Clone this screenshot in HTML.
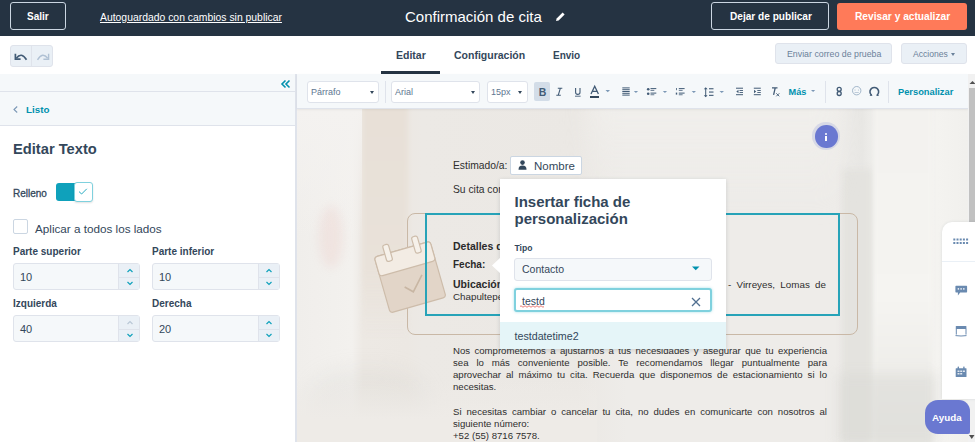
<!DOCTYPE html>
<html><head><meta charset="utf-8">
<style>
*{box-sizing:border-box;margin:0;padding:0}
html,body{width:975px;height:442px;overflow:hidden;background:#fff;font-family:"Liberation Sans",sans-serif;color:#33475b}
.a{position:absolute}
.t{position:absolute;white-space:nowrap;line-height:1}
.btn-o{position:absolute;border:1px solid #cbd6e2;border-radius:3px}
.sel{position:absolute;background:#fff;border:1px solid #dfe3eb;border-radius:3px}
.caret{position:absolute;width:0;height:0;border-left:2.5px solid transparent;border-right:2.5px solid transparent;border-top:3px solid #516f90}
.inp{position:absolute;background:#f5f8fa;border:1px solid #dfe3eb;border-radius:3px}
.spin{position:absolute;right:0;top:0;width:21px;height:100%;background:#eaf0f6;border-left:1px solid #dfe3eb}
.spin:after{content:"";position:absolute;left:0;right:0;top:12.5px;height:1px;background:#dfe3eb}
svg{position:absolute;overflow:visible}
.em{position:absolute;white-space:nowrap;font-family:"Liberation Sans",sans-serif;color:#2e2e2e;line-height:1}
.jl{position:absolute;left:453px;width:374px;white-space:nowrap;text-align:justify;text-align-last:justify;font-size:9.6px;color:#2e2e2e;line-height:1}
</style></head>
<body>
<!-- ================= TOP BAR ================= -->
<div class="a" style="left:0;top:0;width:975px;height:36px;background:#253342"></div>
<div class="btn-o" style="left:10px;top:2px;width:56px;height:28px"></div>
<div class="t" style="left:27px;top:12px;font-size:10px;font-weight:700;color:#fff">Salir</div>
<div class="t" style="left:100px;top:13px;font-size:10.4px;color:#fff;text-decoration:underline">Autoguardado con cambios sin publicar</div>
<div class="t" style="left:405px;top:9px;font-size:15px;color:#fff">Confirmación de cita</div>
<svg style="left:555px;top:11px" width="11" height="11" viewBox="0 0 11 11"><path d="M1 10 L1.6 7.4 L7.6 1.4 L9.6 3.4 L3.6 9.4 Z" fill="#fff"/></svg>
<div class="btn-o" style="left:711px;top:2px;width:118px;height:28px"></div>
<div class="t" style="left:730px;top:12px;font-size:10.1px;font-weight:700;color:#fff">Dejar de publicar</div>
<div class="a" style="left:837px;top:3px;width:130px;height:27px;background:#ff7a59;border-radius:3px"></div>
<div class="t" style="left:855px;top:12px;font-size:10.2px;font-weight:700;color:#fff">Revisar y actualizar</div>

<!-- ================= SECOND BAR ================= -->
<div class="a" style="left:10px;top:45px;width:43px;height:22px;background:#eaf0f6;border:1px solid #dfe3eb;border-radius:3px"></div>
<div class="a" style="left:31px;top:46px;width:1px;height:20px;background:#dfe3eb"></div>
<svg style="left:0;top:0" width="60" height="70">
 <g fill="none" stroke-width="1.7" stroke-linecap="butt">
  <path d="M16.3 58.3 Q21.5 51.5 26.5 59.8" stroke="#425b76"/>
  <path d="M15.4 53.8 V59.2 H20.6" stroke="#425b76"/>
  <path d="M47.7 58.3 Q42.5 51.5 37.5 59.8" stroke="#b0c1d4" stroke-width="1.4"/>
  <path d="M48.6 53.8 V59.2 H43.4" stroke="#b0c1d4" stroke-width="1.4"/>
 </g>
</svg>
<div class="t" style="left:396px;top:50px;font-size:10.5px;font-weight:700;color:#33475b">Editar</div>
<div class="t" style="left:454px;top:50px;font-size:10.5px;font-weight:700;color:#33475b">Configuración</div>
<div class="t" style="left:553px;top:51px;font-size:10px;font-weight:700;color:#33475b">Envio</div>
<div class="a" style="left:381px;top:71px;width:59px;height:3px;background:#253342"></div>
<div class="a" style="left:775px;top:43px;width:117px;height:21px;background:#eaf0f6;border:1px solid #dfe3eb;border-radius:3px"></div>
<div class="t" style="left:787px;top:50px;font-size:8.8px;color:#6a819a">Enviar correo de prueba</div>
<div class="a" style="left:901px;top:43px;width:66px;height:21px;background:#eaf0f6;border:1px solid #dfe3eb;border-radius:3px"></div>
<div class="t" style="left:913px;top:50px;font-size:8.6px;color:#6a819a">Acciones</div>
<div class="caret" style="left:950.5px;top:53px;border-top-color:#6a819a"></div>

<!-- ================= LEFT PANEL ================= -->
<div class="a" style="left:0;top:74px;width:296px;height:18px;background:#f5f8fa;border-bottom:1px solid #dfe3eb"></div>
<svg style="left:281px;top:80px" width="9" height="8" viewBox="0 0 9 8"><path d="M4.5 0.5 L1 4 L4.5 7.5 M8.5 0.5 L5 4 L8.5 7.5" stroke="#0091ae" stroke-width="1.6" fill="none"/></svg>
<div class="a" style="left:0;top:92px;width:296px;height:34px;background:#f5f8fa;border-bottom:1px solid #dfe3eb"></div>
<svg style="left:13px;top:106px" width="5" height="7" viewBox="0 0 5 7"><path d="M4.2 0.5 L1 3.5 L4.2 6.5" stroke="#7c98b6" stroke-width="1.1" fill="none"/></svg>
<div class="t" style="left:26px;top:105px;font-size:9.8px;font-weight:700;color:#0091ae">Listo</div>
<div class="a" style="left:0;top:126px;width:296px;height:316px;background:#fff"></div>
<div class="a" style="left:295px;top:74px;width:2px;height:368px;background:#dfe3eb"></div>
<div class="t" style="left:13px;top:142px;font-size:14.7px;font-weight:700;color:#33475b">Editar Texto</div>
<div class="t" style="left:13px;top:189.3px;font-size:10px;color:#33475b;-webkit-text-stroke:0.3px #33475b">Relleno</div>
<div class="a" style="left:56px;top:183px;width:20px;height:18px;background:#0fa1bb;border-radius:3px 0 0 3px"></div>
<div class="a" style="left:74px;top:182px;width:19px;height:20px;background:#fff;border:1px solid #7fd1de;border-radius:3px;box-shadow:0 1px 2px rgba(0,0,0,.12)"></div>
<svg style="left:78px;top:188px" width="10" height="7" viewBox="0 0 10 7"><path d="M1 3.6 L3.6 6 L8.8 0.8" stroke="#0fa1bb" stroke-width="0.9" fill="none"/></svg>
<div class="a" style="left:13px;top:219px;width:15px;height:15px;background:#fff;border:1px solid #cbd6e2;border-radius:2px"></div>
<div class="t" style="left:35px;top:222.5px;font-size:11.7px;color:#33475b">Aplicar a todos los lados</div>
<div class="t" style="left:13px;top:247px;font-size:10px;font-weight:700">Parte superior</div>
<div class="t" style="left:152px;top:247px;font-size:10px;font-weight:700">Parte inferior</div>
<div class="inp" style="left:13px;top:263px;width:127px;height:27px"><div class="spin"></div></div>
<div class="inp" style="left:152px;top:263px;width:128px;height:27px"><div class="spin"></div></div>
<div class="t" style="left:20px;top:272px;font-size:11px;color:#33475b">10</div>
<div class="t" style="left:159px;top:272px;font-size:11px;color:#33475b">10</div>
<div class="t" style="left:13px;top:299px;font-size:10px;font-weight:700">Izquierda</div>
<div class="t" style="left:152px;top:299px;font-size:10px;font-weight:700">Derecha</div>
<div class="inp" style="left:13px;top:315px;width:127px;height:27px"><div class="spin"></div></div>
<div class="inp" style="left:152px;top:315px;width:128px;height:27px"><div class="spin"></div></div>
<div class="t" style="left:20px;top:324px;font-size:11px;color:#33475b">40</div>
<div class="t" style="left:159px;top:324px;font-size:11px;color:#33475b">20</div>
<!-- spinner chevrons -->
<svg style="left:0;top:0" width="300" height="442">
 <g stroke="#0fa1bb" stroke-width="1.2" fill="none">
  <path d="M127.5 272 L130 269.5 L132.5 272"/><path d="M127.5 282 L130 284.5 L132.5 282"/>
  <path d="M266.5 272 L269 269.5 L271.5 272"/><path d="M266.5 282 L269 284.5 L271.5 282"/>
  <path d="M127.5 324 L130 321.5 L132.5 324" stroke="#b9c7d6"/><path d="M127.5 334 L130 336.5 L132.5 334"/>
  <path d="M266.5 324 L269 321.5 L271.5 324"/><path d="M266.5 334 L269 336.5 L271.5 334"/>
 </g>
</svg>
<!-- ================= CANVAS ================= -->
<div id="cv" class="a" style="left:297px;top:109px;width:678px;height:333px;overflow:hidden;background:#ebe7e2">
  <!-- photo approximation -->
  <div class="a" style="left:0;top:0;width:678px;height:333px;background:linear-gradient(90deg,#f0eeeb 0px,#f3f1ee 55px,#ede9e4 66px,#ece8e3 110px,#ece9e5 125px,#ebe8e4 280px,#eeece9 330px,#eeece9 540px,#e8e7e4 565px,#f1f0ed 580px,#f4f3f0 640px,#f0efec 678px)"></div>
  <div class="a" style="left:65px;top:-10px;width:46px;height:250px;background:linear-gradient(180deg,#e8e0d7 0,#e9e2da 170px,rgba(236,232,227,0) 240px);filter:blur(2px)"></div>
  <div class="a" style="left:0;top:0;width:65px;height:130px;background:linear-gradient(180deg,#f4f2f0,rgba(244,242,240,0))"></div>
  <div class="a" style="left:22px;top:97px;width:24px;height:62px;border-radius:50%;background:rgba(228,170,160,.16);filter:blur(5px)"></div>
  <div class="a" style="left:10px;top:260px;width:120px;height:80px;border-radius:40%;background:rgba(200,198,194,.18);filter:blur(10px)"></div>
  <div class="a" style="left:0;top:270px;width:300px;height:63px;background:linear-gradient(180deg,rgba(239,236,232,0),#eeebe7 40px)"></div>
  <div class="a" style="left:545px;top:60px;width:30px;height:273px;background:#e4e3df;filter:blur(3px)"></div>
  <div class="a" style="left:577px;top:-10px;width:58px;height:353px;background:linear-gradient(180deg,#f3f2ef,#f5f4f1 200px,#e9e8e4 333px);filter:blur(2px)"></div>
  <div class="a" style="left:540px;top:265px;width:100px;height:70px;background:rgba(215,214,210,.45);filter:blur(6px)"></div>
  <div class="a" style="left:290px;top:-20px;width:250px;height:120px;background:linear-gradient(180deg,rgba(243,242,239,.6),rgba(243,242,239,0));filter:blur(12px)"></div>
</div>
<!-- toolbar -->
<div class="a" style="left:297px;top:74px;width:671px;height:35px;background:#f5f8fa;border-bottom:1px solid #dfe3eb;box-shadow:0 1px 2px rgba(0,0,0,.06)"></div>
<div class="sel" style="left:307px;top:81px;width:72px;height:22px"></div>
<div class="t" style="left:311px;top:88px;font-size:9px;color:#5e7691">Párrafo</div>
<div class="caret" style="left:370px;top:91px;border-top-color:#33475b"></div>
<div class="a" style="left:385px;top:81px;width:1px;height:22px;background:#dfe3eb"></div>
<div class="sel" style="left:391px;top:81px;width:89px;height:22px"></div>
<div class="t" style="left:395px;top:88px;font-size:9px;color:#5e7691">Arial</div>
<div class="caret" style="left:471px;top:91px;border-top-color:#33475b"></div>
<div class="sel" style="left:487px;top:81px;width:41px;height:22px"></div>
<div class="t" style="left:491px;top:88px;font-size:9px;color:#5e7691">15px</div>
<div class="caret" style="left:518px;top:91px;border-top-color:#33475b"></div>
<div class="a" style="left:534px;top:82px;width:16px;height:19px;background:#d3dde8;border-radius:2px"></div>
<div class="t" style="left:538.8px;top:87px;font-size:10.5px;font-weight:700;color:#425b76">B</div>
<svg style="left:0;top:0" width="620" height="110"><g fill="none" stroke="#425b76">
 <path d="M557.8 88.2 H562.3 M556.3 95.3 H560.8 M560.4 88.2 L558.2 95.3" stroke-width="1.1"/>
 <path d="M575.6 88 V92.3 Q575.6 94.4 577.8 94.4 Q580 94.4 580 92.3 V88" stroke-width="1.1"/>
 <path d="M575 96.2 H580.6" stroke-width="0.9"/>
 <path d="M591 94 L594.7 86.3 L598.4 94 M592.4 91.3 H597" stroke-width="1.3"/>
</g></svg>
<div class="a" style="left:590px;top:96.3px;width:9px;height:1.8px;background:#33475b"></div>
<svg style="left:0;top:0" width="975" height="110">
 <g fill="#7c98b6">
  <path d="M605.5 90 h4.5 l-2.25 2.3z"/>
  <path d="M633.8 91 h4.3 l-2.15 2.1z"/>
  <path d="M662.8 91 h4.3 l-2.15 2.1z"/>
  <path d="M691.7 91 h4.3 l-2.15 2.1z"/>
  <path d="M719.5 91 h4.5 l-2.25 2.1z"/>
  <path d="M811 90 h4.2 l-2.1 1.9z"/>
 </g>
 <g fill="#425b76">
  <!-- align -->
  <rect x="622.3" y="87.4" width="7.4" height="1"/><rect x="622.3" y="89.2" width="7.4" height="1"/><rect x="622.3" y="91" width="7.4" height="1"/><rect x="622.3" y="92.8" width="7.4" height="1"/><rect x="622.3" y="94.6" width="7.4" height="1"/>
  <!-- bullets -->
  <circle cx="648.2" cy="89.3" r="1.3"/><circle cx="648.2" cy="93.8" r="1.3"/>
  <rect x="650.5" y="88.1" width="5.8" height="1"/><rect x="650.5" y="89.9" width="3.8" height="0.8"/>
  <rect x="650.5" y="92.6" width="5.8" height="1"/><rect x="650.5" y="94.4" width="3.8" height="0.8"/>
  <!-- numbered -->
  <rect x="676" y="88" width="0.8" height="2.2"/><rect x="675.8" y="92.6" width="1.4" height="2"/>
  <rect x="678.8" y="88.1" width="5.8" height="1"/><rect x="678.8" y="89.9" width="3.8" height="0.8"/>
  <rect x="678.8" y="92.6" width="5.8" height="1"/><rect x="678.8" y="94.4" width="3.8" height="0.8"/>
  <!-- line height -->
  <rect x="705.2" y="88" width="1" height="8.5"/><path d="M703.8 89.2 l1.9 -1.9 l1.9 1.9z M703.8 95.3 l1.9 1.9 l1.9 -1.9z"/>
  <rect x="709" y="88.2" width="4.5" height="1.1"/><rect x="709" y="91.5" width="4.5" height="1.1"/><rect x="709" y="94.8" width="4.5" height="1.1"/>
  <!-- outdent -->
  <rect x="736" y="87.7" width="7" height="1"/><rect x="739.5" y="90" width="3.5" height="0.9"/><rect x="739.5" y="92" width="3.5" height="0.9"/><rect x="736" y="94.2" width="7" height="1"/><path d="M738.5 89.8 v3.5 l-2.2 -1.75z"/>
  <!-- indent -->
  <rect x="753.8" y="87.7" width="7" height="1"/><rect x="757.3" y="90" width="3.5" height="0.9"/><rect x="757.3" y="92" width="3.5" height="0.9"/><rect x="753.8" y="94.2" width="7" height="1"/><path d="M754 89.8 v3.5 l2.2 -1.75z"/>
 </g>
 <g stroke="#425b76" fill="none">
  <!-- Tx -->
  <path d="M772 87.8 h5.5 M775.2 87.8 l-1.6 7" stroke-width="1.3"/>
  <path d="M776.3 93.3 l3 3 M779.3 93.3 l-3 3" stroke-width="0.9"/>
  <!-- link -->
  <rect x="837.2" y="87.3" width="4" height="4" rx="2" stroke-width="1.3"/><rect x="837.2" y="91.5" width="4" height="4" rx="2" stroke-width="1.3"/>
  <!-- emoji -->
  <circle cx="856.7" cy="90.7" r="4.2" stroke="#99afc4" stroke-width="0.9"/>
  <!-- omega -->
  <path d="M871.5 95.5 Q869.5 93 870 91 Q871 87.5 874.3 87.5 Q877.6 87.5 878.6 91 Q879.1 93 877.1 95.5" stroke-width="1.6"/>
 </g>
 <g fill="#425b76"><path d="M869.5 95.8 h3 l-1 -1.8z M876.2 95.8 h3 l-2 -1.8z"/></g>
 <g fill="#99afc4"><circle cx="855" cy="90" r="0.5"/><circle cx="858.4" cy="90" r="0.5"/><rect x="854.6" y="92.3" width="4.2" height="0.6"/></g>
</svg>
<div class="t" style="left:788.5px;top:88px;font-size:9.2px;font-weight:700;color:#0091ae">Más</div>
<div class="a" style="left:825px;top:81px;width:1px;height:22px;background:#dfe3eb"></div>
<div class="a" style="left:888px;top:81px;width:1px;height:22px;background:#dfe3eb"></div>
<div class="t" style="left:898px;top:88px;font-size:9.3px;font-weight:700;color:#0091ae">Personalizar</div>
<!-- scrollbar -->
<div class="a" style="left:968px;top:74px;width:7px;height:368px;background:#f1f1f1"></div>
<div class="a" style="left:969px;top:88px;width:6px;height:140px;background:#c1c1c1"></div>
<svg style="left:969px;top:80px" width="6" height="5"><path d="M0.5 4 L3.5 1 L6.5 4z" fill="#505050"/></svg>
<!-- ================= EMAIL CONTENT ================= -->
<div class="em" style="left:453px;top:161px;font-size:10.3px">Estimado/a:</div>
<div class="a" style="left:510px;top:156px;width:72px;height:19px;background:#fff;border:1px solid #cbd6e2;border-radius:2px"></div>
<svg style="left:518px;top:160px" width="9" height="10" viewBox="0 0 9 10"><circle cx="4.5" cy="2.6" r="2.3" fill="#33475b"/><path d="M0.5 9.7 Q0.5 5.6 4.5 5.6 Q8.5 5.6 8.5 9.7 Z" fill="#33475b"/></svg>
<div class="t" style="left:534px;top:160.5px;font-size:11.5px;color:#33475b">Nombre</div>
<div class="em" style="left:453px;top:185px;font-size:10.3px">Su cita con</div>
<!-- beige outer rounded box -->
<div class="a" style="left:407px;top:213px;width:451px;height:122px;border:1.5px solid #c9b8a6;border-radius:8px"></div>
<!-- calendar icon -->
<svg style="left:372px;top:228px" width="76" height="90" viewBox="0 0 76 90">
 <g transform="rotate(-16 38 45)">
  <rect x="8" y="20" width="58" height="58" rx="3" fill="#e2d5c8" stroke="#cdbcaa" stroke-width="1.2"/>
  <rect x="8" y="20" width="58" height="20" rx="3" fill="#f3ece4" stroke="#cdbcaa" stroke-width="1.2"/>
  <rect x="19" y="11" width="6" height="17" rx="2" fill="#f6f1ea" stroke="#cdbcaa" stroke-width="1.2"/>
  <rect x="49" y="11" width="6" height="17" rx="2" fill="#f6f1ea" stroke="#cdbcaa" stroke-width="1.2"/>
  <path d="M29 57 L36 64 L49 50" stroke="#c8b6a3" stroke-width="1.6" fill="none"/>
 </g>
</svg>
<!-- teal box -->
<div class="a" style="left:425px;top:213px;width:415px;height:103px;border:2px solid #27a3b8"></div>
<div class="em" style="left:453px;top:240.5px;font-size:10.5px;font-weight:700;color:#2a2a2a">Detalles de la cita</div>
<div class="em" style="left:453px;top:259.5px;font-size:10px;font-weight:700;color:#2a2a2a">Fecha:</div>
<div class="em" style="left:453px;top:278.5px;font-size:10.5px;font-weight:700;color:#2a2a2a">Ubicación:</div>
<div class="em" style="left:453px;top:292px;font-size:9.8px;color:#2e2e2e">Chapultepec</div>
<div class="em" style="left:728px;top:280px;width:98px;font-size:9.8px;text-align:justify;text-align-last:justify;color:#2e2e2e">- Virreyes, Lomas de</div>
<!-- paragraphs -->
<div class="jl" style="top:346px">Nos comprometemos a ajustarnos a tus necesidades y asegurar que tu experiencia</div>
<div class="jl" style="top:358px">sea lo más conveniente posible. Te recomendamos llegar puntualmente para</div>
<div class="jl" style="top:370px">aprovechar al máximo tu cita. Recuerda que disponemos de estacionamiento si lo</div>
<div class="jl" style="top:382px;text-align-last:left;text-align:left">necesitas.</div>
<div class="jl" style="top:407px">Si necesitas cambiar o cancelar tu cita, no dudes en comunicarte con nosotros al</div>
<div class="jl" style="top:419px;text-align-last:left;text-align:left">siguiente número:</div>
<div class="jl" style="top:431px;text-align-last:left;text-align:left">+52 (55) 8716 7578.</div>

<!-- info circle -->
<div class="a" style="left:812px;top:122px;width:28px;height:28px;border-radius:50%;background:rgba(106,120,209,.18)"></div>
<div class="a" style="left:815px;top:125px;width:22.5px;height:22.5px;border-radius:50%;background:#6a78d1"></div>
<div class="a" style="left:825.3px;top:133px;width:1.8px;height:1.8px;background:#fff;border-radius:1px"></div>
<div class="a" style="left:825.3px;top:135.5px;width:1.8px;height:5px;background:#fff"></div>

<!-- ================= POPUP ================= -->
<div class="a" style="left:500px;top:179px;width:226px;height:170px;background:#fff;box-shadow:0 1px 4px rgba(45,62,80,.18)"></div>
<svg style="left:491px;top:257px" width="10" height="17" viewBox="0 0 10 17"><path d="M10 0 L1 8.5 L10 17 Z" fill="#fff"/></svg>
<div class="t" style="left:514.5px;top:193px;font-size:15px;font-weight:700;color:#33475b;line-height:17px">Insertar ficha de<br>personalización</div>
<div class="t" style="left:514.5px;top:244px;font-size:8.6px;font-weight:700;color:#33475b">Tipo</div>
<div class="a" style="left:514px;top:258px;width:198px;height:23px;background:#f5f8fa;border:1px solid #dfe3eb;border-radius:3px"></div>
<div class="t" style="left:522px;top:264px;font-size:10.5px;color:#33475b">Contacto</div>
<svg style="left:692px;top:266px" width="8" height="5"><path d="M0 0.5 h7.5 l-3.75 3.8z" fill="#0091ae"/></svg>
<div class="a" style="left:514px;top:288px;width:198px;height:24px;background:#fff;border:2px solid #7fd1de;border-radius:3px;box-shadow:0 0 3px rgba(0,164,189,.35)"></div>
<div class="t" style="left:522px;top:295.5px;font-size:10.5px;color:#33475b">testd</div>
<svg style="left:520px;top:305px" width="26" height="3"><path d="M0 1.5 q1 -1.5 2 0 t2 0 t2 0 t2 0 t2 0 t2 0 t2 0 t2 0 t2 0 t2 0 t2 0 t2 0" stroke="#e0443a" stroke-width="0.7" fill="none"/></svg>
<svg style="left:691px;top:296.5px" width="10" height="10"><path d="M1 1 L9 9 M9 1 L1 9" stroke="#516f90" stroke-width="1.3"/></svg>
<div class="a" style="left:500px;top:322px;width:226px;height:27px;background:#e5f5f8"></div>
<div class="t" style="left:514.5px;top:331px;font-size:10.7px;color:#33475b">testdatetime2</div>

<!-- ================= RIGHT SIDEBAR ================= -->
<div class="a" style="left:942px;top:222px;width:40px;height:177px;background:#fff;border-radius:10px 0 0 0;box-shadow:0 0 3px rgba(45,62,80,.12)"></div>
<div class="a" style="left:942px;top:261px;width:33px;height:1px;background:#eaf0f6"></div>
<svg style="left:0;top:0" width="975" height="442">
 <g fill="#6a8ab0">
  <rect x="953.3" y="238.5" width="2" height="2"/><rect x="956.5" y="238.5" width="2" height="2"/><rect x="959.7" y="238.5" width="2" height="2"/><rect x="962.9" y="238.5" width="2" height="2"/><rect x="966.1" y="238.5" width="2" height="2"/>
  <rect x="953.3" y="242" width="2" height="2"/><rect x="956.5" y="242" width="2" height="2"/><rect x="959.7" y="242" width="2" height="2"/><rect x="962.9" y="242" width="2" height="2"/><rect x="966.1" y="242" width="2" height="2"/>
  <path d="M956 285.8 h10.5 q0.6 0 0.6 0.6 v5.4 q0 0.6 -0.6 0.6 h-6.3 l-2.3 3 v-3 h-1.9 q-0.6 0 -0.6 -0.6 v-5.4 q0 -0.6 0.6 -0.6z"/>
  <path d="M956.3 326 h9.6 q0.5 0 0.5 0.5 v2.6 h-10.6 v-2.6 q0 -0.5 0.5 -0.5z"/>
  <path d="M956.2 368.2 h9.8 q0.5 0 0.5 0.5 v7.8 q0 0.5 -0.5 0.5 h-9.8 q-0.5 0 -0.5 -0.5 v-7.8 q0 -0.5 0.5 -0.5z"/><rect x="957.6" y="366.5" width="1.4" height="2.5" rx="0.5"/><rect x="963.2" y="366.5" width="1.4" height="2.5" rx="0.5"/>
 </g>
 <g fill="none" stroke="#6a8ab0" stroke-width="1">
  <path d="M956.3 328.8 v5.8 M966 328.8 v5.8"/><path d="M955.5 335.6 q5.6 0.8 11 0"/>
 </g>
 <g fill="#fff"><rect x="957.7" y="288.2" width="1.4" height="1.4"/><rect x="960.4" y="288.2" width="1.4" height="1.4"/><rect x="963.1" y="288.2" width="1.4" height="1.4"/>
  <rect x="957.5" y="370.6" width="2" height="1.2"/><rect x="960.2" y="370.6" width="2" height="1.2"/><rect x="962.9" y="370.6" width="2" height="1.2"/><rect x="957.5" y="373.2" width="2" height="1.2"/><rect x="960.2" y="373.2" width="2" height="1.2"/></g>
</svg>
<div class="a" style="left:925px;top:400px;width:45px;height:34px;background:#6a78d1;border-radius:13px 11px 2px 13px"></div>
<div class="t" style="left:932px;top:413px;font-size:9.8px;font-weight:700;color:#fff">Ayuda</div>
<svg style="left:968px;top:434px" width="7" height="8"><path d="M1 1 L6.5 1 L3.75 5z" fill="#505050"/></svg>
</body></html>
